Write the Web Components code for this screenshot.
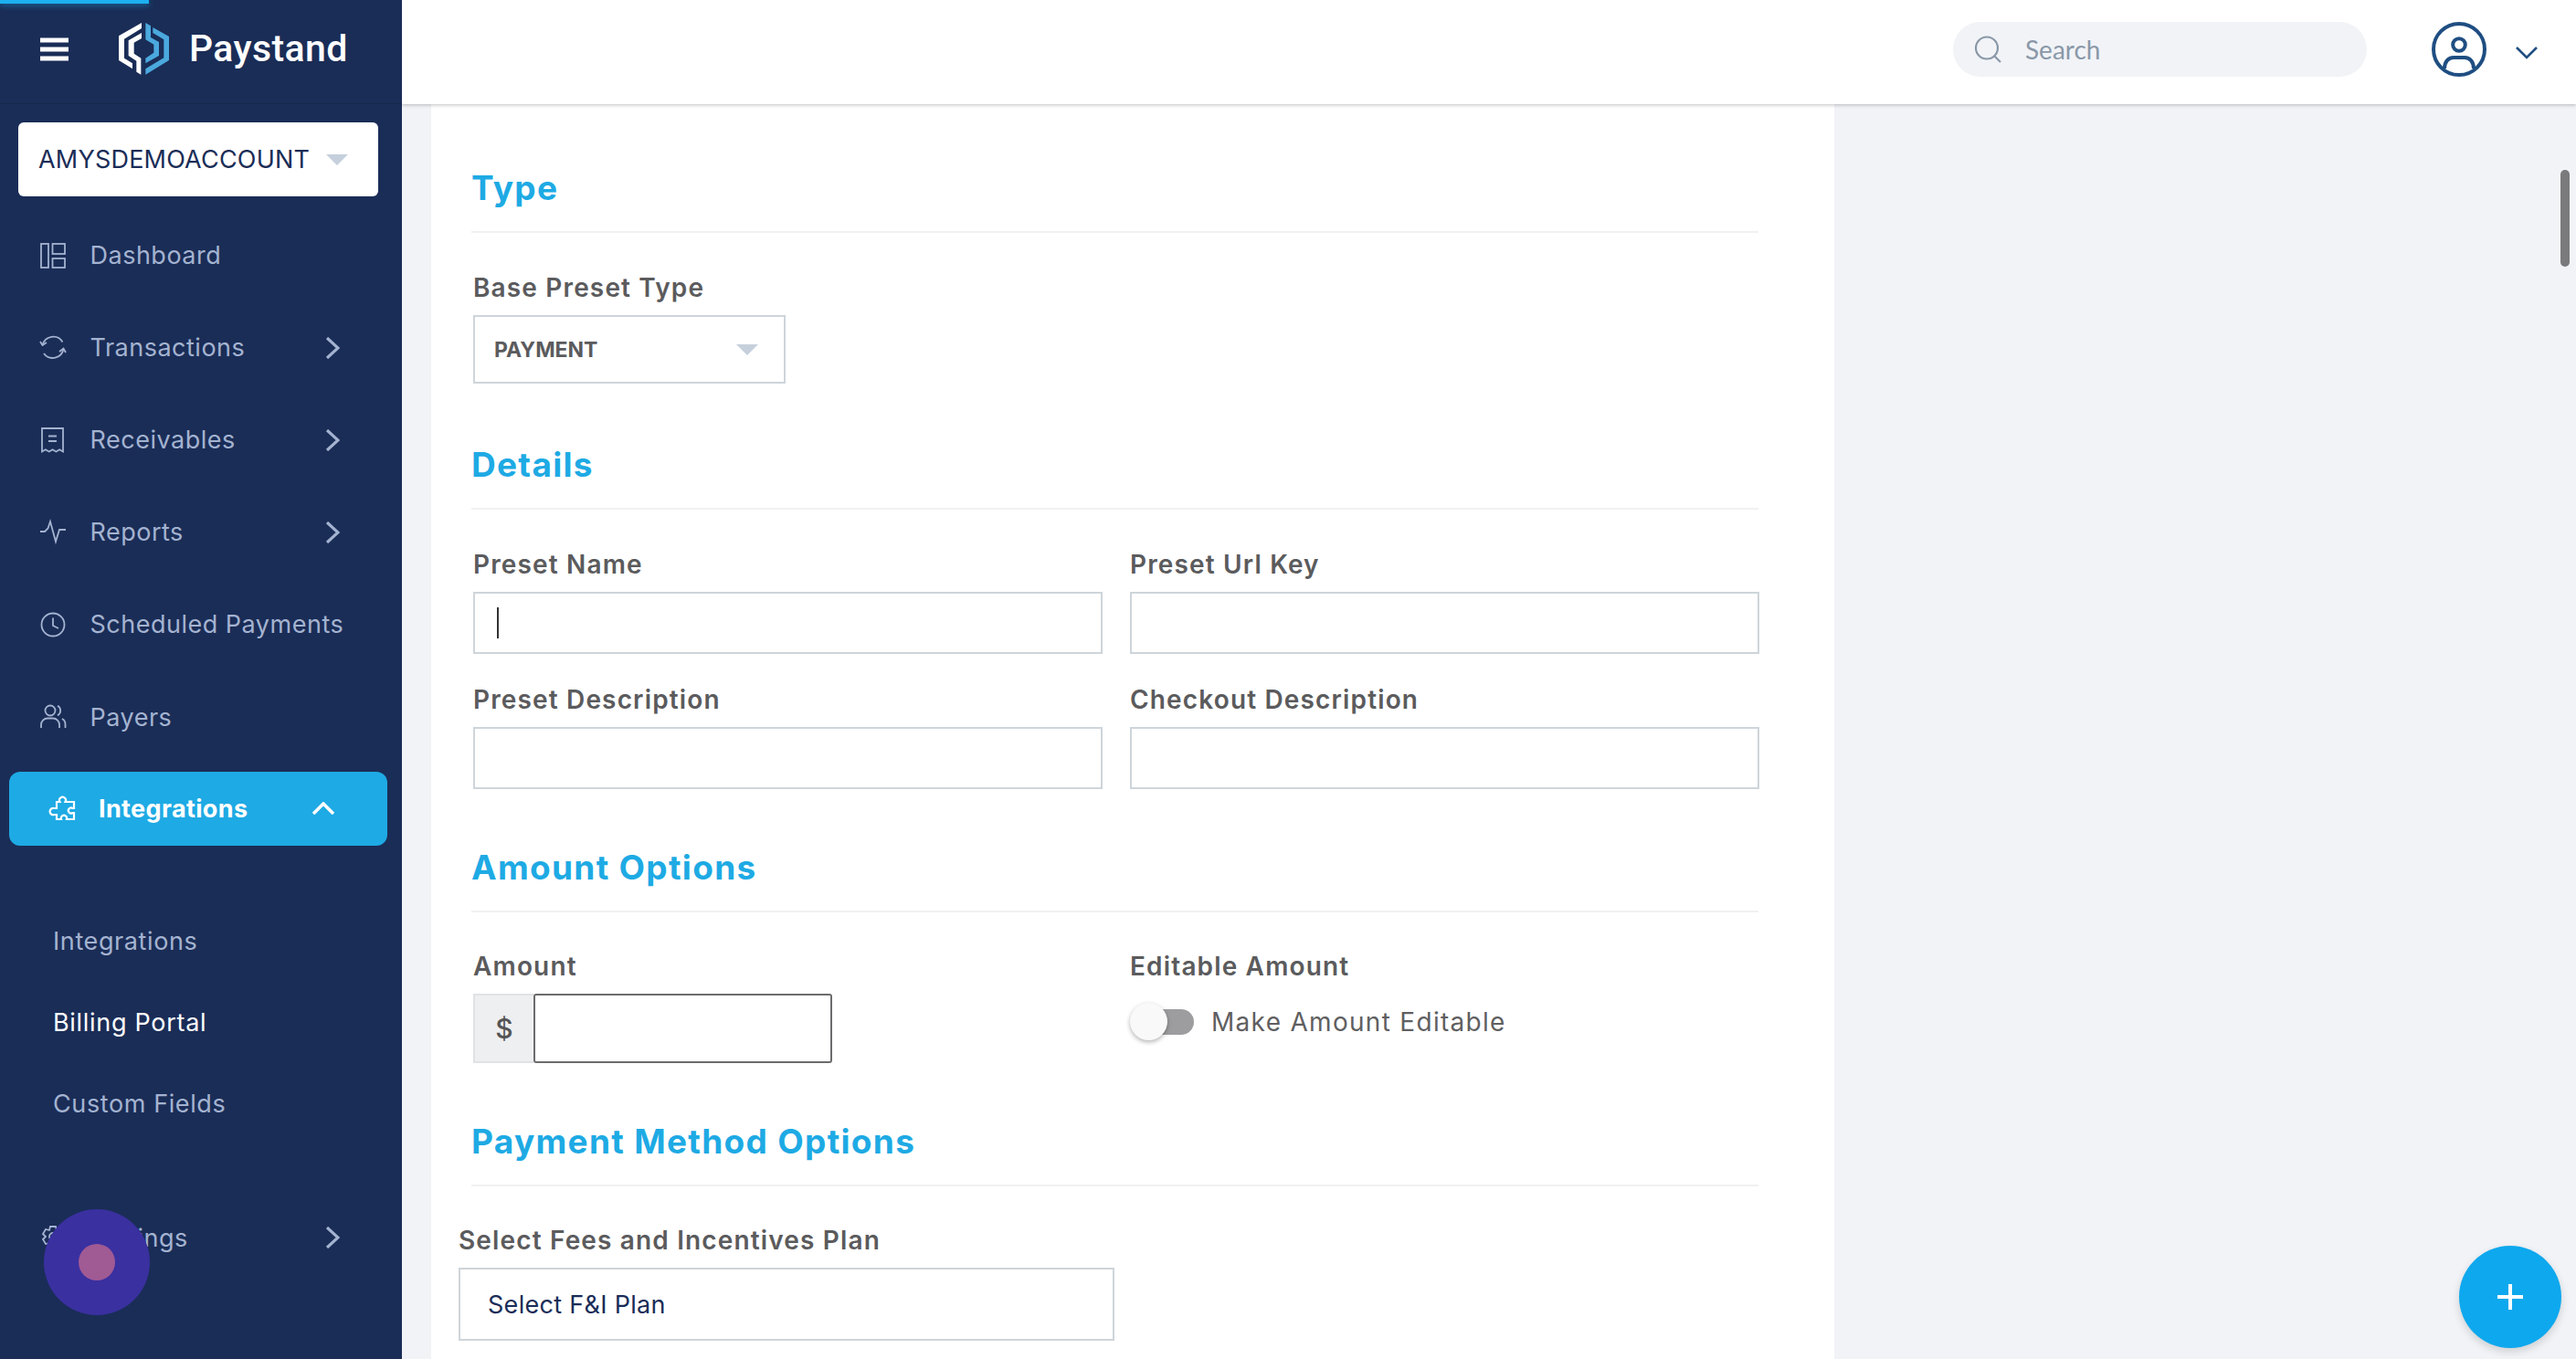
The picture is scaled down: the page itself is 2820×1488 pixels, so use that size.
<!DOCTYPE html>
<html lang="en">
<head>
<meta charset="utf-8">
<title>Paystand</title>
<style>
  html, body { margin: 0; height: 100%; overflow: hidden; background: #f1f3f7; }
  body { display: flex; font-family: "Inter", "Liberation Sans", sans-serif; }
</style>
</head>
<body>
<ps-sidebar>
  <ps-nav-item icon="dashboard" label="Dashboard"></ps-nav-item>
  <ps-nav-item icon="transactions" label="Transactions" arrow></ps-nav-item>
  <ps-nav-item icon="receivables" label="Receivables" arrow></ps-nav-item>
  <ps-nav-item icon="reports" label="Reports" arrow></ps-nav-item>
  <ps-nav-item icon="clock" label="Scheduled Payments"></ps-nav-item>
  <ps-nav-item icon="payers" label="Payers"></ps-nav-item>
  <ps-nav-item icon="puzzle" label="Integrations" active></ps-nav-item>
  <ps-sub-nav>
    <ps-sub-item>Integrations</ps-sub-item>
    <ps-sub-item current>Billing Portal</ps-sub-item>
    <ps-sub-item>Custom Fields</ps-sub-item>
  </ps-sub-nav>
  <ps-nav-item icon="settings" label="Settings" arrow></ps-nav-item>
</ps-sidebar>

<ps-main>
  <ps-section heading="Type">
    <ps-grid>
      <ps-field label="Base Preset Type"><ps-select value="PAYMENT"></ps-select></ps-field>
    </ps-grid>
  </ps-section>
  <ps-section heading="Details">
    <ps-grid>
      <ps-field label="Preset Name"><ps-input caret></ps-input></ps-field>
      <ps-field label="Preset Url Key"><ps-input></ps-input></ps-field>
      <ps-field label="Preset Description"><ps-input></ps-input></ps-field>
      <ps-field label="Checkout Description"><ps-input></ps-input></ps-field>
    </ps-grid>
  </ps-section>
  <ps-section heading="Amount Options" tight>
    <ps-grid>
      <ps-field label="Amount"><ps-amount></ps-amount></ps-field>
      <ps-field label="Editable Amount"><ps-toggle>Make Amount Editable</ps-toggle></ps-field>
    </ps-grid>
  </ps-section>
  <ps-section heading="Payment Method Options" tight>
    <ps-field label="Select Fees and Incentives Plan" outdent><ps-plan>Select F&amp;I Plan</ps-plan></ps-field>
  </ps-section>
</ps-main>

<ps-recorder></ps-recorder>
<ps-fab></ps-fab>

<script>
const ICONS = {
  dashboard: '<rect x="1" y="1" width="8" height="26"/><rect x="13.5" y="1" width="13.5" height="11"/><rect x="13.5" y="17" width="13.5" height="10"/>',
  transactions: '<path d="M2.5 11A12 12 0 0 1 24.5 7.5"/><path d="M25.5 15A12 12 0 0 1 4 20"/><path d="M0 7l2.5 4L7 8"/><path d="M21 18l4.5-3.5L28 19"/>',
  receivables: '<path d="M2 1h23v25.5l-3.8-2.3-3.8 2.3-3.9-2.3-3.8 2.3-3.9-2.3L2 26.5z"/><path d="M9 9.5h9M9 15h9"/>',
  reports: '<path d="M0 13h5l3.5-3.5L11 2l6 22 4-13h7"/>',
  clock: '<circle cx="14" cy="14" r="12.5"/><path d="M14 6.5V15l6 3"/>',
  payers: '<circle cx="11" cy="7" r="5.5"/><path d="M1 26v-3.5a7 7 0 0 1 7-7h6a7 7 0 0 1 7 7V26"/><path d="M19 1.8a6 6 0 0 1 0 10.6"/><path d="M24 16a7 7 0 0 1 3.5 6.5V26"/>',
  puzzle: '<path d="M8 7h3.5a3.5 3.5 0 1 1 6 0H27v7h-1.5a3 3 0 1 0 0 5H27v7h-8a3.2 3.2 0 1 0-6 0H8v-5H5.5a3.7 3.7 0 1 1 0-7H8z"/>',
  settings: '<path d="M11 2h6l1 4 4-1 3 5-3 3 3 3-3 5-4-1-1 4h-6l-1-4-4 1-3-5 3-3-3-3 3-5 4 1z"/><circle cx="14" cy="13" r="4"/>'
};

class PsSidebar extends HTMLElement {
  constructor() {
    super();
    this.attachShadow({mode: 'open'}).innerHTML = `
      <style>
        :host { display: flex; flex-direction: column; flex: none; width: 440px; height: 100%; background: #1a2d57; position: relative; }
        .progress { position: absolute; left: 0; top: 0; width: 163px; height: 4px; background: #1cb0f0; box-shadow: 0 2px 6px rgba(28,176,240,.5); }
        header { display: flex; align-items: center; height: 114px; box-sizing: border-box; padding: 0 0 6px 44px; border-bottom: 1px solid #16264a; }
        .burger { display: block; width: 31px; }
        .logo { margin-left: 45px; display: block; }
        .brand { margin-left: 12px; font: 500 41px "Roboto", sans-serif; color: #fff; letter-spacing: .4px; position: relative; top: -1px; }
        .account { display: flex; align-items: center; justify-content: space-between; box-sizing: border-box; margin: 20px 26px 14px 20px; height: 81px; padding: 0 33px 0 22px; background: #fff; border-radius: 6px; color: #1a2d57; font-size: 27px; letter-spacing: .2px; }
        .account i { width: 0; height: 0; border: 12px solid transparent; border-top: 12px solid #c6d0dc; border-bottom: 0; }
      </style>
      <div class="progress"></div>
      <header>
        <svg class="burger" viewBox="0 0 31 26" height="26"><path d="M0 3h31M0 13h31M0 23h31" stroke="#fff" stroke-width="5" stroke-linejoin="round"/></svg>
        <svg class="logo" width="75" height="75" viewBox="0 0 225 225">
          <path fill="#fff" d="M105 27L30 70v80l45 28v-18l-27-17V80l57-35z"/>
          <path fill="#fff" d="M105 60v18L80 92v36l23 15v54l-15-9v-36l-26-17V85z"/>
          <path fill="#4ba9de" d="M118 27l17 10v38l27 15v45l-44 25v-17l27-18V98l-27-16z"/>
          <path fill="#4ba9de" d="M142 42l53 30v78l-77 47v-19l60-36V82l-36-22z"/>
        </svg>
        <span class="brand">Paystand</span>
      </header>
      <div class="account"><span>AMYSDEMOACCOUNT</span><i></i></div>
      <slot></slot>`;
  }
}

class PsNavItem extends HTMLElement {
  constructor() {
    super();
    this.attachShadow({mode: 'open'});
  }

  connectedCallback() {
    const active = this.hasAttribute('active');
    const arrow = this.hasAttribute('arrow');
    this.shadowRoot.innerHTML = `
      <style>
        :host { display: flex; align-items: center; box-sizing: border-box; height: 101.1px; padding-left: 44px; color: #a4b3d0; font-size: 27px; letter-spacing: .5px; }
        :host([active]) { height: 81px; margin: 9px 16px 0 10px; padding-left: 44px; background: #1eaae4; border-radius: 12px; color: #fff; font-weight: 700; letter-spacing: .35px; }
        svg.icon { flex: none; width: 28px; height: 28px; fill: none; stroke: currentColor; stroke-width: 1.8; overflow: visible; }
        .label { margin-left: 26.5px; flex: 1; }
        :host([active]) .label { margin-left: 26px; }
        :host([active]) svg.icon { stroke-width: 2.2; }
        svg.arrow { flex: none; margin-right: 68px; width: 16px; height: 24px; fill: none; stroke: currentColor; stroke-width: 3.2; }
        svg.up { flex: none; margin-right: 58px; width: 24px; height: 14px; fill: none; stroke: #fff; stroke-width: 3.6; }
      </style>
      <svg class="icon" viewBox="0 0 28 28">${ICONS[this.getAttribute('icon')]}</svg>
      <span class="label">${this.getAttribute('label')}</span>
      ${arrow ? '<svg class="arrow" viewBox="0 0 16 24"><path d="M2 1l12 11L2 23"/></svg>' : ''}
      ${active ? '<svg class="up" viewBox="0 0 24 14"><path d="M1 13L12 2l11 11"/></svg>' : ''}`;
  }
}

class PsSubNav extends HTMLElement {
  constructor() {
    super();
    this.attachShadow({mode: 'open'}).innerHTML = `
      <style>:host { display: block; padding: 60px 0 52px; }</style>
      <slot></slot>`;
  }
}

class PsSubItem extends HTMLElement {
  constructor() {
    super();
    this.attachShadow({mode: 'open'}).innerHTML = `
      <style>
        :host { display: flex; align-items: center; height: 89px; padding-left: 58px; color: #a4b3d0; font-size: 27px; letter-spacing: .6px; }
        :host([current]) { color: #fff; letter-spacing: .7px; }
      </style>
      <slot></slot>`;
  }
}

class PsMain extends HTMLElement {
  constructor() {
    super();
    this.attachShadow({mode: 'open'}).innerHTML = `
      <style>
        :host { display: flex; flex-direction: column; flex: 1; min-width: 0; height: 100%; position: relative; overflow: hidden; }
        .top { display: flex; align-items: center; flex: none; height: 114px; box-sizing: border-box; padding-bottom: 6px; background: #fff; box-shadow: 0 1px 4px rgba(0,0,0,.25); position: relative; z-index: 1; }
        .search { display: flex; align-items: center; box-sizing: border-box; width: 453px; height: 60px; margin-left: 1698px; padding-left: 23px; background: #f1f3f7; border-radius: 30px; color: #8a98a8; font: 28px "Lato", sans-serif; }
        .search span { margin-left: 26px; }
        .avatar { margin-left: 71px; }
        .caret { margin-left: 32px; margin-top: 8px; }
        .card { flex: 1; width: 1536px; margin-left: 32px; box-sizing: border-box; padding: 62px 0 0 44px; background: #fff; }
        .thumb { position: absolute; right: 7px; top: 186px; width: 10px; height: 106px; border-radius: 5px; background: #7a7a7c; }
      </style>
      <div class="top">
        <div class="search">
          <svg width="30" height="30" viewBox="0 0 30 30" fill="none" stroke="#8a98a8" stroke-width="2.2"><circle cx="14" cy="13.5" r="12"/><path d="M22.5 22.5L29 29"/></svg>
          <span>Search</span>
        </div>
        <svg class="avatar" width="60" height="60" viewBox="0 0 60 60" fill="none" stroke="#1f4e82" stroke-width="4"><circle cx="30" cy="30" r="28"/><circle cx="30" cy="25" r="6.8"/><path d="M14 51C14 44 18 39 24 39H36C42 39 46 44 46 51"/></svg>
        <svg class="caret" width="24" height="14" viewBox="0 0 24 14" fill="none" stroke="#1f4e82" stroke-width="2.6"><path d="M1 1l11 11L23 1"/></svg>
      </div>
      <div class="card"><slot></slot></div>
      <div class="thumb"></div>`;
  }
}

class PsSection extends HTMLElement {
  constructor() {
    super();
    this.attachShadow({mode: 'open'});
  }

  connectedCallback() {
    this.shadowRoot.innerHTML = `
      <style>
        :host { display: block; width: 1409px; padding-bottom: 56px; }
        h2 { margin: 0 0 40px; height: 79px; box-sizing: border-box; border-bottom: 2px solid #f0f1f3; font-size: 37px; line-height: 60px; font-weight: 700; color: #1eaae4; letter-spacing: 1.3px; }
        :host([tight]) h2 { margin-bottom: 39px; }
      </style>
      <h2>${this.getAttribute('heading')}</h2>
      <slot></slot>`;
  }
}

class PsGrid extends HTMLElement {
  constructor() {
    super();
    this.attachShadow({mode: 'open'}).innerHTML = `
      <style>:host { display: grid; grid-template-columns: 689px 689px; column-gap: 30px; row-gap: 30px; margin-left: 2px; }</style>
      <slot></slot>`;
  }
}

class PsField extends HTMLElement {
  constructor() {
    super();
    this.attachShadow({mode: 'open'});
  }

  connectedCallback() {
    this.shadowRoot.innerHTML = `
      <style>
        :host { display: block; min-width: 0; }
        :host([outdent]) { margin-left: -14px; }
        label { display: block; height: 40px; line-height: 40px; margin-bottom: 10px; color: #5b5b5d; font-size: 28px; font-weight: 600; letter-spacing: 1.15px; white-space: nowrap; }
      </style>
      <label>${this.getAttribute('label')}</label>
      <slot></slot>`;
  }
}

class PsSelect extends HTMLElement {
  constructor() {
    super();
    this.attachShadow({mode: 'open'});
  }

  connectedCallback() {
    this.shadowRoot.innerHTML = `
      <style>
        :host { display: flex; align-items: center; justify-content: space-between; box-sizing: border-box; width: 342px; height: 75px; margin-bottom: 3px; padding: 0 28px 0 21px; border: 2px solid #ced5da; color: #5b5b5d; font-size: 23px; font-weight: 700; }
        i { width: 0; height: 0; border: 12px solid transparent; border-top: 12px solid #c6d0dc; border-bottom: 0; }
      </style>
      <span>${this.getAttribute('value')}</span><i></i>`;
  }
}

class PsInput extends HTMLElement {
  constructor() {
    super();
    this.attachShadow({mode: 'open'});
  }

  connectedCallback() {
    this.shadowRoot.innerHTML = `
      <style>
        :host { display: flex; align-items: center; box-sizing: border-box; height: 68px; padding-left: 24px; border: 2px solid #ced5da; }
        span { width: 2px; height: 34px; background: #333; }
      </style>
      ${this.hasAttribute('caret') ? '<span></span>' : ''}`;
  }
}

class PsAmount extends HTMLElement {
  constructor() {
    super();
    this.attachShadow({mode: 'open'}).innerHTML = `
      <style>
        :host { display: flex; width: 393px; height: 76px; }
        .addon { display: flex; align-items: center; justify-content: center; box-sizing: border-box; width: 66px; background: #eeeff1; border: 2px solid #dfe3e6; border-right: 0; color: #555; font-size: 30px; font-weight: 500; }
        .box { flex: 1; border: 2px solid #6b6b6d; border-radius: 3px; }
      </style>
      <div class="addon">$</div><div class="box"></div>`;
  }
}

class PsToggle extends HTMLElement {
  constructor() {
    super();
    this.attachShadow({mode: 'open'}).innerHTML = `
      <style>
        :host { display: flex; align-items: center; height: 41px; margin-top: 20px; color: #5f5f61; font-size: 28px; letter-spacing: 1.3px; }
        .track { position: relative; flex: none; width: 68px; height: 28px; margin-left: 2px; margin-right: 19px; background: #9d9d9f; border-radius: 14px; }
        .knob { position: absolute; left: -2px; top: -7px; width: 41px; height: 41px; border-radius: 50%; background: #f9f9fa; box-shadow: 0 2px 5px rgba(0,0,0,.3); }
      </style>
      <div class="track"><div class="knob"></div></div><slot></slot>`;
  }
}

class PsPlan extends HTMLElement {
  constructor() {
    super();
    this.attachShadow({mode: 'open'}).innerHTML = `
      <style>
        :host { display: flex; align-items: center; box-sizing: border-box; width: 718px; height: 80px; padding-left: 30px; border: 2px solid #ced5da; color: #1a2d57; font-size: 27px; letter-spacing: .3px; }
      </style>
      <slot></slot>`;
  }
}

class PsRecorder extends HTMLElement {
  constructor() {
    super();
    this.attachShadow({mode: 'open'}).innerHTML = `
      <style>
        :host { position: absolute; left: 48px; top: 1324px; width: 116px; height: 116px; display: flex; align-items: center; justify-content: center; border-radius: 50%; background: #3a30a0; }
        div { width: 40px; height: 40px; border-radius: 50%; background: #a05a94; }
      </style>
      <div></div>`;
  }
}

class PsFab extends HTMLElement {
  constructor() {
    super();
    this.attachShadow({mode: 'open'}).innerHTML = `
      <style>
        :host { position: absolute; left: 2692px; top: 1364px; width: 112px; height: 112px; display: flex; align-items: center; justify-content: center; border-radius: 50%; background: #0ea8ee; box-shadow: 0 4px 10px rgba(0,0,0,.15); }
      </style>
      <svg width="28" height="28" viewBox="0 0 28 28" stroke="#fff" stroke-width="4"><path d="M14 0v28M0 14h28"/></svg>`;
  }
}

customElements.define('ps-sidebar', PsSidebar);
customElements.define('ps-nav-item', PsNavItem);
customElements.define('ps-sub-nav', PsSubNav);
customElements.define('ps-sub-item', PsSubItem);
customElements.define('ps-main', PsMain);
customElements.define('ps-section', PsSection);
customElements.define('ps-grid', PsGrid);
customElements.define('ps-field', PsField);
customElements.define('ps-select', PsSelect);
customElements.define('ps-input', PsInput);
customElements.define('ps-amount', PsAmount);
customElements.define('ps-toggle', PsToggle);
customElements.define('ps-plan', PsPlan);
customElements.define('ps-recorder', PsRecorder);
customElements.define('ps-fab', PsFab);
</script>
</body>
</html>
